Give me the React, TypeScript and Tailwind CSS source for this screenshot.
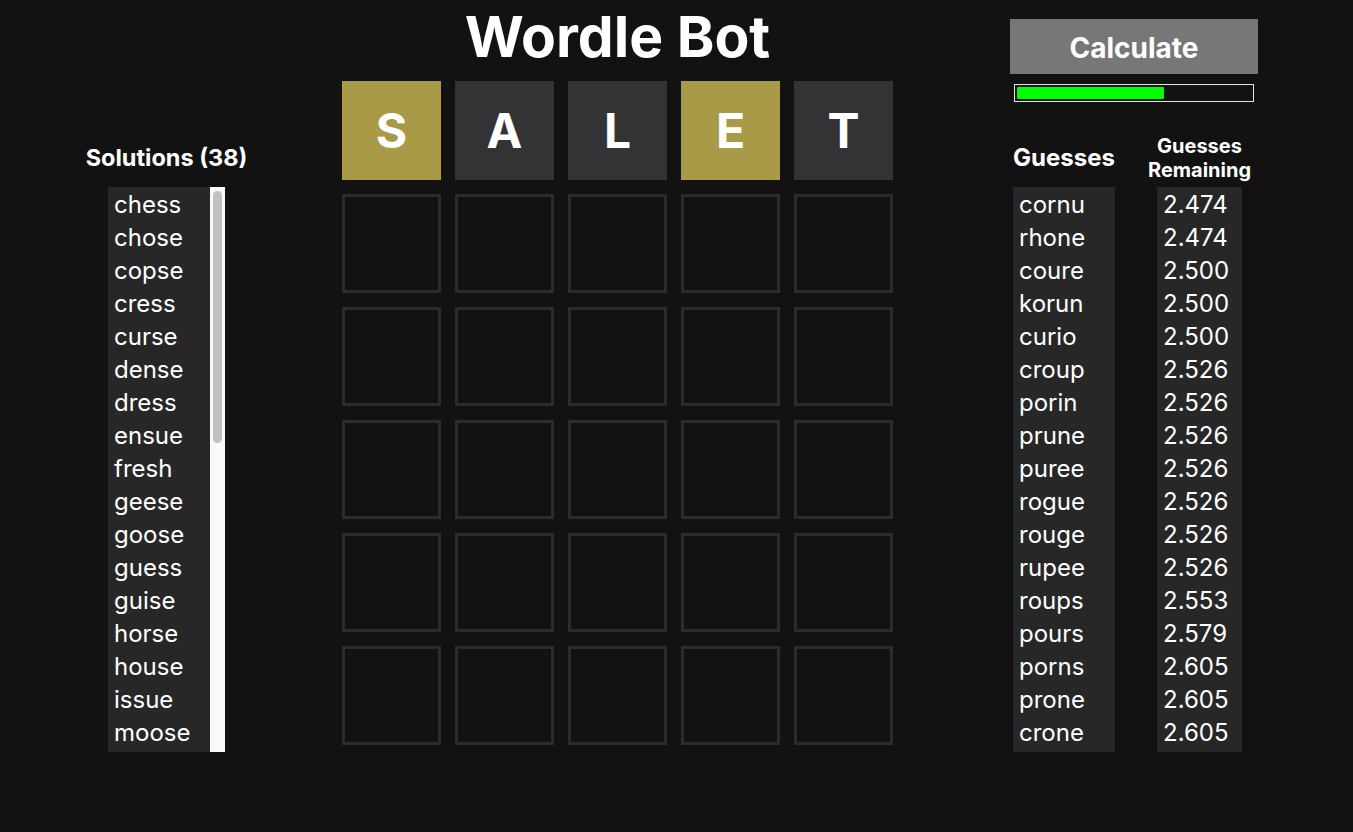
import React from 'react';

type TileState = 'present' | 'absent' | 'empty';

const firstGuess: { letter: string; state: TileState }[] = [
  { letter: 'S', state: 'present' },
  { letter: 'A', state: 'absent' },
  { letter: 'L', state: 'absent' },
  { letter: 'E', state: 'present' },
  { letter: 'T', state: 'absent' },
];

const solutions = [
  'chess', 'chose', 'copse', 'cress', 'curse', 'dense', 'dress', 'ensue', 'fresh',
  'geese', 'goose', 'guess', 'guise', 'horse', 'house', 'issue', 'moose',
];

const guesses: [string, string][] = [
  ['cornu', '2.474'],
  ['rhone', '2.474'],
  ['coure', '2.500'],
  ['korun', '2.500'],
  ['curio', '2.500'],
  ['croup', '2.526'],
  ['porin', '2.526'],
  ['prune', '2.526'],
  ['puree', '2.526'],
  ['rogue', '2.526'],
  ['rouge', '2.526'],
  ['rupee', '2.526'],
  ['roups', '2.553'],
  ['pours', '2.579'],
  ['porns', '2.605'],
  ['prone', '2.605'],
  ['crone', '2.605'],
];

const Tile: React.FC<{ letter?: string; state: TileState }> = ({ letter, state }) => {
  if (state === 'empty') {
    return <div className="w-[99px] h-[99px] border-[3px] border-[#2c2c2c]" />;
  }
  return (
    <div
      className={`w-[99px] h-[99px] flex items-center justify-center text-[48px] font-bold text-white ${
        state === 'present' ? 'bg-[#a99a48]' : 'bg-[#333336]'
      }`}
    >
      {letter}
    </div>
  );
};

export default function App() {
  return (
    <div className="min-h-screen w-full bg-[#121212] text-white font-[Inter,sans-serif] flex">
      {/* Solutions */}
      <div className="w-[333px] pt-[134px] flex flex-col items-center">
        <div className="h-[48px] flex items-center text-[23.5px] font-bold">Solutions (38)</div>
        <div className="mt-[5px] flex h-[565px]">
          <div className="w-[102px] bg-[#272727] pt-[1px] pl-[6px] text-[24px] leading-[33px] overflow-hidden">
            {solutions.map((s) => (
              <div key={s}>{s}</div>
            ))}
          </div>
          {/* scrollbar */}
          <div className="w-[15px] bg-[#f9f9f9] pt-[4px] flex justify-center">
            <div className="w-[9px] h-[252px] rounded-full bg-[#c1c1c1]" />
          </div>
        </div>
      </div>

      {/* Board */}
      <div className="ml-[9px] w-[551px] flex flex-col items-center pt-[8px]">
        <h1 className="text-[57px] leading-[58px] font-bold">Wordle Bot</h1>
        <div className="mt-[15px] grid grid-cols-5 gap-[14px]">
          {firstGuess.map((t, i) => (
            <Tile key={`g${i}`} letter={t.letter} state={t.state} />
          ))}
          {Array.from({ length: 25 }).map((_, i) => (
            <Tile key={`e${i}`} state="empty" />
          ))}
        </div>
      </div>

      {/* Guesses */}
      <div className="ml-[117px] w-[248px] pt-[19px] flex flex-col">
        <button className="h-[55px] w-full bg-[#777777] pt-[3px] text-[28px] font-bold text-white">
          Calculate
        </button>
        <div className="mt-[10px] mx-[4px] h-[18px] border border-[#e5e5e5] p-[2px]">
          <div className="h-full w-[63%] bg-[#00ff00] rounded-[1px]" />
        </div>

        <div className="mt-[32px] flex pl-[3px]">
          <div className="w-[102px] flex flex-col">
            <div className="h-[48px] flex items-center justify-center text-[24px] font-bold">Guesses</div>
            <div className="mt-[5px] h-[565px] bg-[#272727] pt-[1px] pl-[6px] text-[24px] leading-[33px]">
              {guesses.map(([w]) => (
                <div key={w}>{w}</div>
              ))}
            </div>
          </div>
          <div className="ml-[42px] w-[85px] flex flex-col">
            <div className="h-[48px] flex flex-col items-center justify-center text-[20px] leading-[24px] font-bold text-center whitespace-nowrap">
              <span>Guesses</span>
              <span>Remaining</span>
            </div>
            <div className="mt-[5px] h-[565px] bg-[#272727] pt-[1px] pl-[6px] text-[24px] leading-[33px]">
              {guesses.map(([w, v]) => (
                <div key={w}>{v}</div>
              ))}
            </div>
          </div>
        </div>
      </div>
    </div>
  );
}
